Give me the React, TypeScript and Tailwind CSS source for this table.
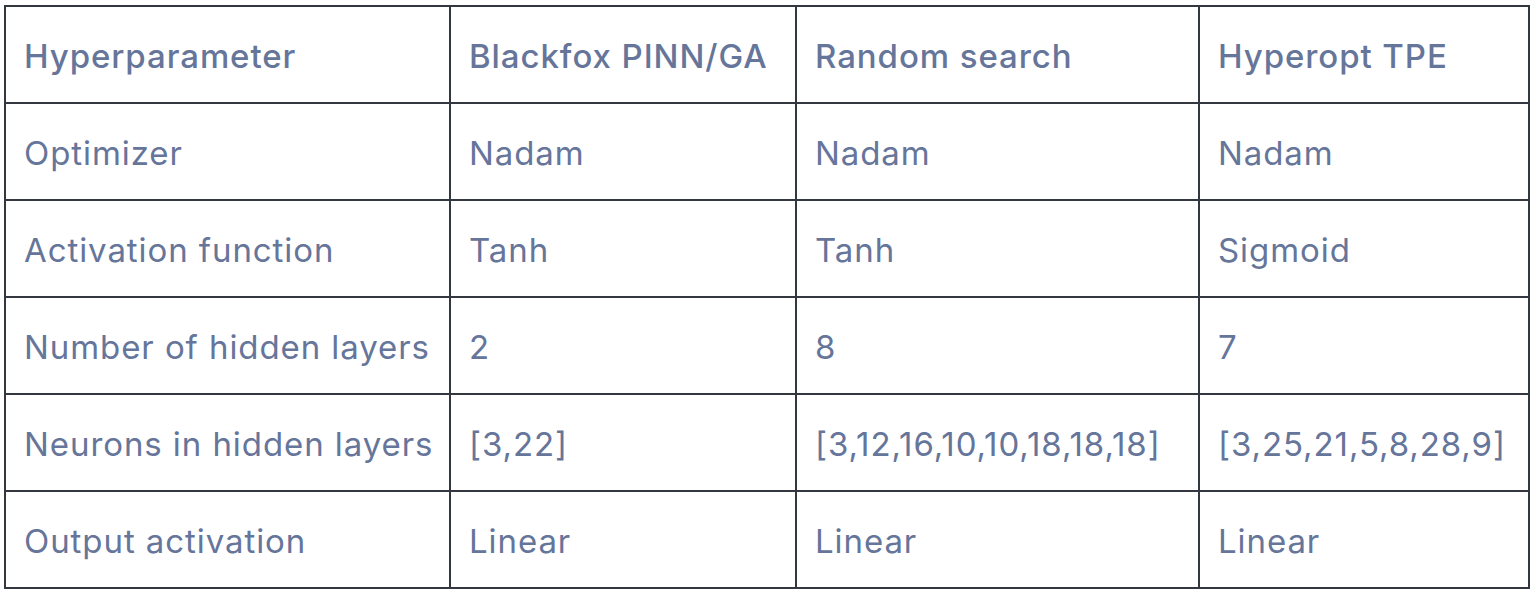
import React from "react";

const header = ["Hyperparameter", "Blackfox PINN/GA", "Random search", "Hyperopt TPE"];

const rows = [
  ["Optimizer", "Nadam", "Nadam", "Nadam"],
  ["Activation function", "Tanh", "Tanh", "Sigmoid"],
  ["Number of hidden layers", "2", "8", "7"],
  ["Neurons in hidden layers", "[3,22]", "[3,12,16,10,10,18,18,18]", "[3,25,21,5,8,28,9]"],
  ["Output activation", "Linear", "Linear", "Linear"],
];

const widths = ["w-[445px]", "w-[346px]", "w-[403px]", "w-[330px]"];

const App = () => {
  return (
    <div className="min-h-[594px] w-full bg-white pl-[4px] pt-[5px] font-['Inter',sans-serif]">
      <table className="w-[1524px] table-fixed border-collapse border-2 border-[#33373f] text-[33px] tracking-[0.028em] text-[#66759a]">
        <thead>
          <tr className="h-[97px]">
            {header.map((h, i) => (
              <th
                key={h}
                className={`${widths[i]} whitespace-nowrap border-2 border-[#33373f] pl-[18px] pr-0 pt-[4px] text-left font-medium`}
              >
                {h}
              </th>
            ))}
          </tr>
        </thead>
        <tbody>
          {rows.map((r) => (
            <tr key={r[0]} className="h-[97px]">
              {r.map((c, i) => (
                <td
                  key={i}
                  className="whitespace-nowrap border-2 border-[#33373f] pl-[18px] pr-0 pt-[4px] font-normal"
                >
                  {c}
                </td>
              ))}
            </tr>
          ))}
        </tbody>
      </table>
    </div>
  );
};

export default App;
